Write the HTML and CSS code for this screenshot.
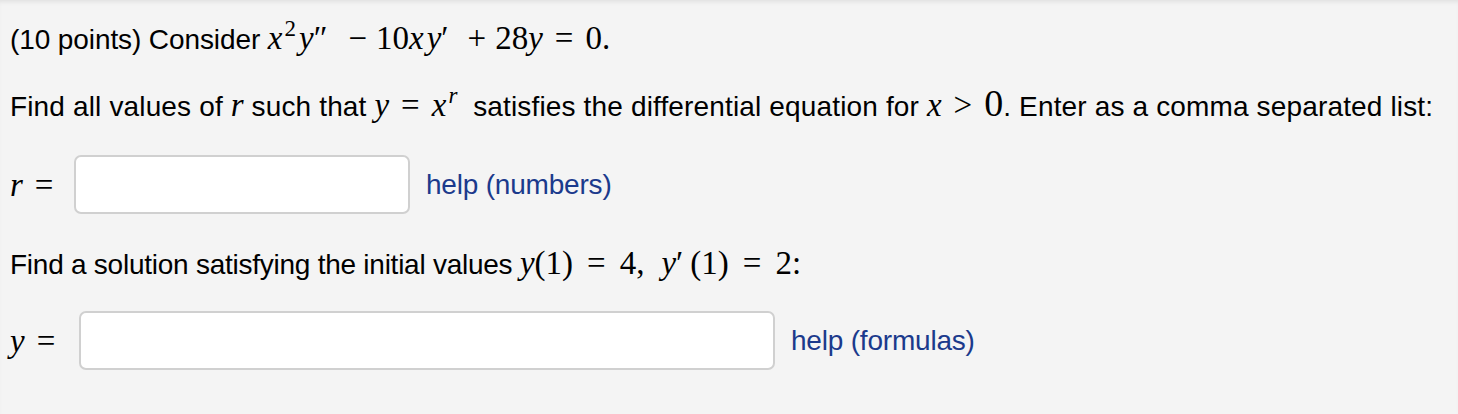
FILE: index.html
```html
<!DOCTYPE html>
<html>
<head>
<meta charset="utf-8">
<link rel="stylesheet" href="styles.css">
</head>
<body>
<div class="page">
  <p class="line first">(10 points) Consider <span class="m"><i>x</i><sup>2</sup><i class="sp">y</i><span class="pr2">″</span><span class="bin">−</span>10<i>x</i><i class="sp">y</i><span class="pr1">′</span><span class="bin">+</span>28<i>y</i><span class="rel">=</span>0.</span></p>
  <p class="line second">Find all values of <span class="m"><i>r</i></span> such that <span class="m"><i>y</i><span class="rel">=</span><i>x</i><sup><i>r</i></sup></span>&nbsp; satisfies the differential equation for <span class="m"><i>x</i><span class="rel">&gt;</span><span class="big0">0</span></span>. Enter as a comma separated list:</p>
  <div class="row row-r">
    <span class="m label label-r"><i>r</i><span class="rel">=</span></span>
    <input class="answer short" type="text">
    <a class="help" href="#">help (numbers)</a>
  </div>
  <p class="line third">Find a solution satisfying the initial values <span class="m"><i>y</i>(1)<span class="rel">=</span>4,<span class="comma-sp"></span><i>y</i><span class="pr3">′</span>(1)<span class="rel">=</span>2:</span></p>
  <div class="row row-y">
    <span class="m label label-y"><i>y</i><span class="rel">=</span></span>
    <input class="answer long" type="text">
    <a class="help" href="#">help (formulas)</a>
  </div>
</div>
</body>
</html>
```
FILE: styles.css
```css
html, body {
  margin: 0;
  padding: 0;
  background: #f4f4f4;
  height: 100%;
}
body {
  font-family: "Liberation Sans", Arial, sans-serif;
  font-size: 28px;
  color: #000;
  box-shadow: inset 0 4px 4px -2px rgba(0,0,0,0.08);
}
.page {
  padding: 23px 0 0 10px;
}
.line {
  margin: 0;
  height: 34px;
  line-height: 34px;
  white-space: nowrap;
  letter-spacing: -0.1px;
}
.second { margin-top: 33px; letter-spacing: 0.15px; }
.third { margin-top: 34px; letter-spacing: -0.25px; }
.m {
  font-family: "Liberation Serif", "Times New Roman", serif;
  font-size: 33px;
  line-height: 0;
  letter-spacing: 0;
}
.m sup {
  font-size: 23px;
  vertical-align: 13px;
  line-height: 0;
  margin-left: 2px;
}
.sp { margin-left: 3px; }
.pr1 { margin-right: 10px; }
.pr2 { margin-right: 12px; }
.pr3 { margin-right: 7px; }
.bin { padding: 0 9px; }
.rel { padding: 0 12px; }
.second .rel { padding: 0 12px; }
.third .rel { padding: 0 14px; }
.comma-sp { display: inline-block; width: 17px; }
.big0 { font-size: 38px; line-height: 0; }
.row {
  display: flex;
  align-items: center;
  height: 59px;
}
.row-r { margin-top: 31px; }
.row-y { margin-top: 29px; }
.label { white-space: nowrap; flex: none; line-height: 34px; }
.label-r { width: 64px; }
.label-y { width: 69px; }
.label .rel { padding: 0 12px 0 12px; }
.answer {
  height: 59px;
  box-sizing: border-box;
  border: 2px solid #d0d0d0;
  border-radius: 7px;
  background: #fff;
  margin: 0 16px 0 0;
  padding: 0;
  flex: none;
}
.short { width: 336px; }
.long { width: 696px; }
.help {
  color: #1b3a8c;
  text-decoration: none;
  font-family: "Liberation Sans", Arial, sans-serif;
  font-size: 28px;
  letter-spacing: -0.2px;
}
```
